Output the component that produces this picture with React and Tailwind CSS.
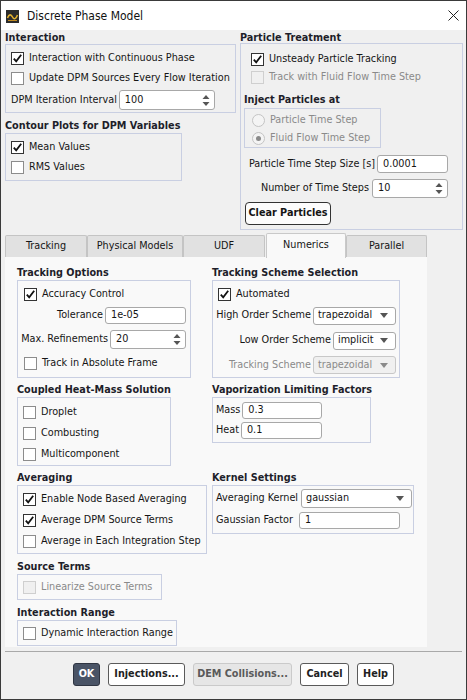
import React from "react";

const boxBorder = "border border-[#c9cfe2]";

function CheckMark() {
  return (
    <svg width="11" height="11" viewBox="0 0 11 11">
      <path d="M1.8 5.6 L4.2 8.4 L9.2 1.8" fill="none" stroke="#111" strokeWidth="1.8" />
    </svg>
  );
}

function Check({ label, checked, disabled, className = "" }) {
  const box = disabled
    ? "border-[#cfcfcf] bg-[#f0f0f0]"
    : checked
    ? "border-[#333] bg-white"
    : "border-[#8c8c8c] bg-white";
  return (
    <div className={`flex items-center gap-[5px] whitespace-nowrap ${className}`}>
      <div className={`w-[13px] h-[13px] border flex items-center justify-center shrink-0 ${box}`}>
        {checked && <CheckMark />}
      </div>
      <span className={disabled ? "text-[#8a8a8a]" : ""}>{label}</span>
    </div>
  );
}

function Radio({ label, selected, className = "" }) {
  return (
    <div className={`flex items-center gap-[5px] whitespace-nowrap ${className}`}>
      <div className="w-[13px] h-[13px] rounded-full border border-[#c4c4c4] bg-[#f4f4f4] flex items-center justify-center">
        {selected && <div className="w-[5px] h-[5px] rounded-full bg-[#8a8a8a]" />}
      </div>
      <span className="text-[#8a8a8a]">{label}</span>
    </div>
  );
}

function Spin() {
  return (
    <svg width="8" height="13" viewBox="0 0 8 13" className="shrink-0">
      <path d="M0.5 5 L4 1 L7.5 5 Z" fill="#555" />
      <path d="M0.5 8 L4 12 L7.5 8 Z" fill="#555" />
    </svg>
  );
}

function Arrow({ color = "#555" }) {
  return (
    <svg width="8" height="5" viewBox="0 0 8 5" className="shrink-0">
      <path d="M0 0 L8 0 L4 5 Z" fill={color} />
    </svg>
  );
}

function Input({ value, w, h = "h-[18px]", spin }) {
  return (
    <div className={`${w} ${h} border border-[#a8a8a8] rounded-[3px] bg-white flex items-center justify-between pl-[5px] pr-[4px] shrink-0`}>
      <span>{value}</span>
      {spin && <Spin />}
    </div>
  );
}

function Select({ value, w, h = "h-[18px]", disabled }) {
  return (
    <div
      className={`${w} ${h} border rounded-[3px] flex items-center justify-between pl-[4px] pr-[7px] shrink-0 ${
        disabled ? "border-[#c8c8c8] bg-[#f0f0f0] text-[#8a8a8a]" : "border-[#a8a8a8] bg-white"
      }`}
    >
      <span>{value}</span>
      <Arrow color={disabled ? "#8a8a8a" : "#555"} />
    </div>
  );
}

function Heading({ children, className = "" }) {
  return <div className={`font-bold text-[#1e1e2a] leading-[14px] whitespace-nowrap ${className}`}>{children}</div>;
}

function TitleIcon() {
  return (
    <svg width="13" height="13" viewBox="0 0 13 13">
      <rect width="13" height="13" fill="#2b2b2b" />
      <path d="M1.5 8 C3 4 5 4 6.5 7 C8 10 10 9 11.5 5" fill="none" stroke="#e0b030" strokeWidth="1.6" />
      <path d="M2 10.5 L11 10.5" stroke="#c08a20" strokeWidth="1" />
    </svg>
  );
}

function Tab({ label, active, w }) {
  return active ? (
    <div className={`${w} h-[25px] -mb-[1px] bg-[#f9f9f9] border border-b-0 border-[#c9c9c9] rounded-t-[2px] flex items-center justify-center pb-[2px] relative z-10`}>
      {label}
    </div>
  ) : (
    <div className={`${w} h-[22px] bg-[#e1e1e1] border border-b-0 border-[#c4c4c4] rounded-t-[2px] flex items-center justify-center`}>
      {label}
    </div>
  );
}

function Button({ children, kind, w }) {
  const cls =
    kind === "primary"
      ? "bg-[#4a5466] border-[#2f3542] text-white"
      : kind === "disabled"
      ? "bg-[#e6e6e6] border-[#cacaca] text-[#5a5a5a]"
      : "bg-white border-[#5a5a5a] text-[#222]";
  return (
    <div className={`${w} h-[23px] border rounded-[3px] flex items-center justify-center font-bold whitespace-nowrap ${cls}`}>
      {children}
    </div>
  );
}

export default function App() {
  return (
    <div className="w-[467px] h-[700px] border border-[#3a3a3a] bg-[#f0f0f0] text-[10.75px] text-[#151515] font-['DejaVu_Sans_Condensed','DejaVu_Sans',Tahoma,sans-serif] overflow-hidden flex flex-col">
      {/* title bar */}
      <div className="h-[29px] bg-white flex items-center shrink-0">
        <div className="ml-[5px] mt-[1px]">
          <TitleIcon />
        </div>
        <span className="ml-[8px] text-[12px] text-[#111]">Discrete Phase Model</span>
        <svg width="11" height="11" viewBox="0 0 11 11" className="ml-auto mr-[7px]">
          <path d="M0.5 0.5 L10.5 10.5 M10.5 0.5 L0.5 10.5" stroke="#222" strokeWidth="1" />
        </svg>
      </div>

      {/* top section */}
      <div className="flex pl-[4px] gap-[4px] shrink-0">
        <div className="w-[231px] flex flex-col">
          <Heading className="h-[14px] leading-[16px]">Interaction</Heading>
          <div className={`${boxBorder} pl-[5px] pt-[3px] pb-[1px]`}>
            <Check className="h-[20px]" checked label="Interaction with Continuous Phase" />
            <Check className="h-[21px]" label="Update DPM Sources Every Flow Iteration" />
            <div className="h-[22px] flex items-center gap-[2px] whitespace-nowrap">
              <span>DPM Iteration Interval</span>
              <Input value="100" w="w-[96px]" h="h-[20px]" spin />
            </div>
          </div>
          <Heading className="pt-[6px]">Contour Plots for DPM Variables</Heading>
          <div className={`${boxBorder} w-[177px] pl-[5px] pt-[3px] pb-[2px]`}>
            <Check className="h-[20px]" checked label="Mean Values" />
            <Check className="h-[21px]" label="RMS Values" />
          </div>
        </div>

        <div className="w-[223px] flex flex-col">
          <Heading className="h-[13px] leading-[16px]">Particle Treatment</Heading>
          <div className={`${boxBorder} pt-[6px] pb-[4px]`}>
            <Check className="h-[18px] pl-[10px]" checked label="Unsteady Particle Tracking" />
            <Check className="h-[18px] pl-[10px]" disabled label="Track with Fluid Flow Time Step" />
            <Heading className="h-[22px] pt-[7px] pl-[3px]">Inject Particles at</Heading>
            <div className={`${boxBorder} ml-[3px] w-[137px] pl-[7px] pt-[2px]`}>
              <Radio className="h-[18px]" label="Particle Time Step" />
              <Radio className="h-[18px]" selected label="Fluid Flow Time Step" />
            </div>
            <div className="mt-[6px] h-[20px] flex items-center justify-end gap-[2px] pr-[14px] whitespace-nowrap">
              <span>Particle Time Step Size [s]</span>
              <Input value="0.0001" w="w-[71px]" />
            </div>
            <div className="mt-[4px] h-[20px] flex items-center justify-end gap-[3px] pr-[14px] whitespace-nowrap">
              <span>Number of Time Steps</span>
              <Input value="10" w="w-[76px]" h="h-[19px]" spin />
            </div>
            <div className="mt-[4px] ml-[4px] w-[86px] h-[23px] border border-[#333] rounded-[4px] bg-[#fcfcfc] font-bold flex items-center justify-center whitespace-nowrap">
              Clear Particles
            </div>
          </div>
        </div>
      </div>

      {/* tabs */}
      <div className="mt-[2px] ml-[4px] h-[25px] flex items-end shrink-0">
        <Tab label="Tracking" w="w-[82px]" />
        <Tab label="Physical Models" w="w-[96px]" />
        <Tab label="UDF" w="w-[82px]" />
        <div className="w-[1px]" />
        <Tab label="Numerics" w="w-[80px]" active />
        <Tab label="Parallel" w="w-[81px]" />
      </div>

      {/* numerics panel */}
      <div className="ml-[4px] w-[422px] h-[390px] bg-[#f9f9f9] pl-[12px] shrink-0 grid grid-cols-[195px_1fr] content-start whitespace-nowrap">
        {/* row A */}
        <div>
          <Heading className="pt-[9px]">Tracking Options</Heading>
          <div className={`${boxBorder} w-[174px] pl-[6px] pr-[4px] pt-[4px] pb-[2px]`}>
            <Check className="h-[18px]" checked label="Accuracy Control" />
            <div className="h-[24px] flex items-center justify-end gap-[2px]">
              <span>Tolerance</span>
              <Input value="1e-05" w="w-[81px]" h="h-[17px]" />
            </div>
            <div className="h-[24px] flex items-center justify-end gap-[2px]">
              <span>Max. Refinements</span>
              <Input value="20" w="w-[76px]" h="h-[19px]" spin />
            </div>
            <Check className="h-[24px]" label="Track in Absolute Frame" />
          </div>
        </div>
        <div>
          <Heading className="pt-[9px]">Tracking Scheme Selection</Heading>
          <div className={`${boxBorder} w-[188px] pl-[5px] pr-[3px] pt-[4px]`}>
            <Check className="h-[18px]" checked label="Automated" />
            <div className="h-[25px] flex items-center justify-end gap-[2px]">
              <span>High Order Scheme</span>
              <Select value="trapezoidal" w="w-[83px]" />
            </div>
            <div className="h-[25px] flex items-center justify-end gap-[2px]">
              <span>Low Order Scheme</span>
              <Select value="implicit" w="w-[63px]" />
            </div>
            <div className="h-[24px] flex items-center justify-end gap-[2px]">
              <span className="text-[#8a8a8a]">Tracking Scheme</span>
              <Select value="trapezoidal" w="w-[83px]" disabled />
            </div>
          </div>
        </div>

        {/* row B */}
        <div>
          <Heading className="pt-[5px]">Coupled Heat-Mass Solution</Heading>
          <div className={`${boxBorder} w-[154px] pl-[5px] pt-[4px]`}>
            <Check className="h-[21px]" label="Droplet" />
            <Check className="h-[21px]" label="Combusting" />
            <Check className="h-[21px]" label="Multicomponent" />
          </div>
        </div>
        <div>
          <Heading className="pt-[5px]">Vaporization Limiting Factors</Heading>
          <div className={`${boxBorder} w-[159px] pl-[3px] pt-[2px] pb-[1px]`}>
            <div className="h-[20px] flex items-center gap-[2px]">
              <span>Mass</span>
              <Input value="0.3" w="w-[80px]" h="h-[17px]" />
            </div>
            <div className="h-[21px] flex items-center gap-[2px]">
              <span>Heat</span>
              <Input value="0.1" w="w-[81px]" h="h-[17px]" />
            </div>
          </div>
        </div>

        {/* row C */}
        <div>
          <Heading className="pt-[5px]">Averaging</Heading>
          <div className={`${boxBorder} w-[190px] pl-[5px] pt-[3px] pb-[1px]`}>
            <Check className="h-[21px]" checked label="Enable Node Based Averaging" />
            <Check className="h-[21px]" checked label="Average DPM Source Terms" />
            <Check className="h-[21px]" label="Average in Each Integration Step" />
          </div>
          <Heading className="pt-[6px]">Source Terms</Heading>
          <div className={`${boxBorder} w-[145px] pl-[5px]`}>
            <Check className="h-[24px]" disabled label="Linearize Source Terms" />
          </div>
          <Heading className="pt-[6px]">Interaction Range</Heading>
          <div className={`${boxBorder} w-[160px] pl-[5px]`}>
            <Check className="h-[24px]" label="Dynamic Interaction Range" />
          </div>
        </div>
        <div>
          <Heading className="pt-[5px]">Kernel Settings</Heading>
          <div className={`${boxBorder} w-[202px] pl-[3px] pt-[2px] pb-[1px]`}>
            <div className="h-[21px] flex items-center">
              <span className="w-[85px] shrink-0">Averaging Kernel</span>
              <Select value="gaussian" w="w-[111px]" h="h-[19px]" />
            </div>
            <div className="h-[23px] flex items-center">
              <span className="w-[83px] shrink-0">Gaussian Factor</span>
              <Input value="1" w="w-[101px]" h="h-[17px]" />
            </div>
          </div>
        </div>
      </div>

      {/* separator + buttons */}
      <div className="mt-[4px] ml-[4px] w-[457px] h-[1px] bg-[#a9a9a9] shrink-0" />
      <div className="mt-[11px] flex justify-center gap-[8px] shrink-0">
        <Button kind="primary" w="w-[27px]">OK</Button>
        <Button w="w-[77px]">Injections...</Button>
        <Button kind="disabled" w="w-[99px]">DEM Collisions...</Button>
        <Button w="w-[49px]">Cancel</Button>
        <Button w="w-[37px]">Help</Button>
      </div>
    </div>
  );
}
